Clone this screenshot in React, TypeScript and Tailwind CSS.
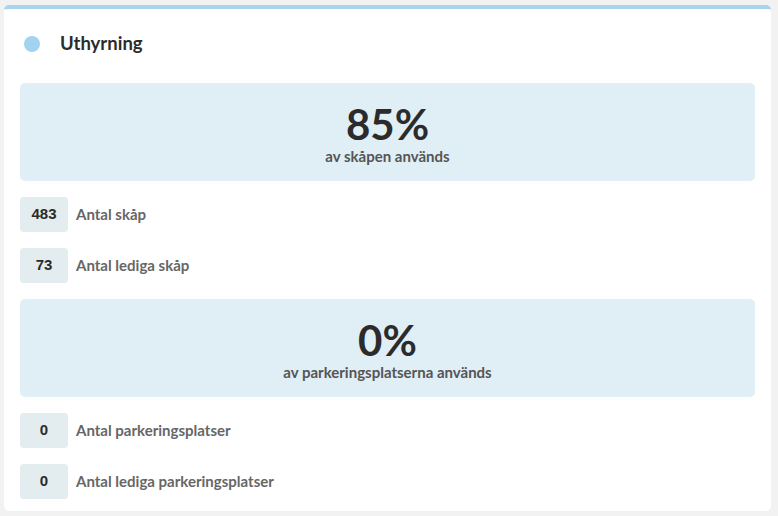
import React from "react";

function Stat({ value, label }: { value: string; label: string }) {
  return (
    <div className="flex items-center gap-2">
      <div className="w-12 h-[35px] rounded-[4px] bg-[#e3ecef] flex items-center justify-center text-[15px] font-bold text-[#2b2b2b] [font-family:'Liberation_Sans',Arial,sans-serif]">
        {value}
      </div>
      <div className="text-[15px] font-bold text-[#666]">{label}</div>
    </div>
  );
}

function Big({ value, label }: { value: string; label: string }) {
  return (
    <div className="h-[98px] rounded-[5px] bg-[#e0eef6] flex flex-col items-center justify-center pt-[2px]">
      <div className="text-[42px] leading-[46px] font-bold text-[#2b2b2b]">{value}</div>
      <div className="text-[15px] leading-[18px] font-bold text-[#555]">{label}</div>
    </div>
  );
}

export default function App() {
  return (
    <div className="w-[778px] h-[516px] bg-[#f2f2f2] pt-[5px] pl-[4px] [font-family:Lato,'Noto_Sans',sans-serif]">
      <div className="w-[767px] h-[506px] bg-white rounded-[5px] border-t-4 border-[#a8d4ec] px-4 flex flex-col">
        <div className="flex items-center h-[74px] pb-[4px]">
          <div className="w-4 h-4 rounded-full bg-[#a3d3f0] ml-[4px]" />
          <div className="ml-5 text-[18.5px] font-bold text-[#2b2b2b]">Uthyrning</div>
        </div>
        <div className="flex flex-col gap-4">
          <Big value="85%" label="av skåpen används" />
          <Stat value="483" label="Antal skåp" />
          <Stat value="73" label="Antal lediga skåp" />
          <Big value="0%" label="av parkeringsplatserna används" />
          <Stat value="0" label="Antal parkeringsplatser" />
          <Stat value="0" label="Antal lediga parkeringsplatser" />
        </div>
      </div>
    </div>
  );
}
